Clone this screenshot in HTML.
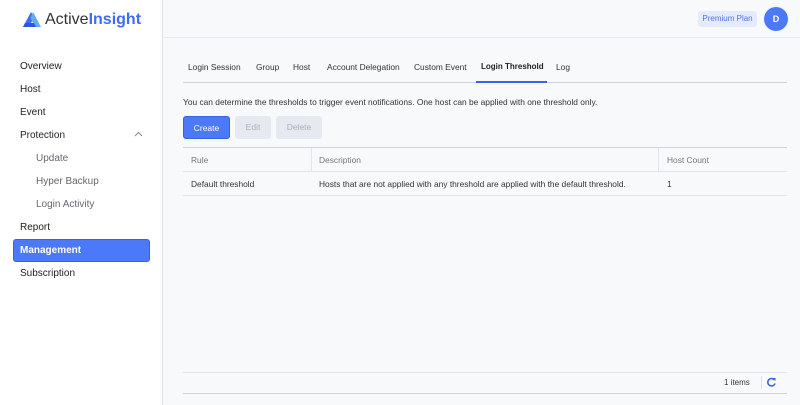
<!DOCTYPE html><html><head><style>
*{box-sizing:border-box;margin:0;padding:0}
body{width:800px;height:405px;overflow:hidden;font-family:"Liberation Sans",sans-serif;background:#f8f9fb;position:relative;color:#222}
.sb{position:absolute;left:0;top:0;width:163px;height:405px;background:#fff;border-right:1px solid #dfe2e8}
.logo{position:absolute;left:22px;top:11px;font-size:16px;color:#333;display:flex;align-items:center}
.logo b{color:#3d6df5;font-weight:bold}
.nav{position:absolute;left:20px;font-size:10px;color:#222}
.sub{left:36px;color:#6b6570}
.act{position:absolute;left:13px;top:239px;width:137px;height:23px;background:#4c78fa;border:1px solid #3d62d8;border-radius:3px}
.hd{position:absolute;left:164px;top:0;right:0;height:38px;border-bottom:1px solid #e6e8ee;background:#f8f9fb}
.plan{position:absolute;left:698px;top:11px;width:59px;height:16px;background:#e4ebfd;border-radius:3px;font-size:8px;color:#5574e0;text-align:center;line-height:16px}
.av{position:absolute;left:764px;top:7px;width:24px;height:24px;border-radius:50%;background:#4c78fa;color:#fff;font-size:9px;font-weight:bold;text-align:center;line-height:24px}
.t{position:absolute;top:62px;font-size:8.4px;color:#333}
.tl{position:absolute;left:183px;top:82px;width:604px;height:1px;background:#cfd4de}
.btn{position:absolute;top:116px;height:23px;border-radius:3px;font-size:8.5px;text-align:center;line-height:23px}
.c{position:absolute;font-size:8.4px}
</style></head><body>
<div class="sb">
<div class="logo"><svg width="20" height="18" viewBox="0 0 20 18"><path d="M9 1 L1 16 L7 16 L12 6Z" fill="#3d6df5"/><path d="M11 1 L19 16 L13 16 L8.5 7Z" fill="#63a9f5"/><path d="M3 12 L12 12 L14 16 L1 16Z" fill="#2f56d8"/></svg><span style="margin-left:3px">Active<b>Insight</b></span></div>
<div class="nav" style="top:61px">Overview</div>
<div class="nav" style="top:84px">Host</div>
<div class="nav" style="top:107px">Event</div>
<div class="nav" style="top:130px">Protection</div>
<svg style="position:absolute;left:134px;top:131px" width="9" height="6"><path d="M1 5 L4.5 1.5 L8 5" stroke="#888" fill="none"/></svg>
<div class="nav sub" style="top:153px">Update</div>
<div class="nav sub" style="top:176px">Hyper Backup</div>
<div class="nav sub" style="top:199px">Login Activity</div>
<div class="nav" style="top:222px">Report</div>
<div class="act"></div>
<div class="nav" style="top:245px;color:#fff;font-weight:bold">Management</div>
<div class="nav" style="top:268px">Subscription</div>
</div>
<div class="hd"></div>
<div class="plan">Premium Plan</div>
<div class="av">D</div>
<div class="t" style="left:188px">Login Session</div>
<div class="t" style="left:256px">Group</div>
<div class="t" style="left:293px">Host</div>
<div class="t" style="left:327px">Account Delegation</div>
<div class="t" style="left:414px">Custom Event</div>
<div class="t" style="left:481px;font-weight:bold;color:#222;font-size:8px">Login Threshold</div>
<div class="t" style="left:556px">Log</div>
<div class="tl"></div>
<div style="position:absolute;left:476px;top:81px;width:71px;height:2px;background:#3d62f0"></div>
<div class="c" style="left:183px;top:97px;color:#333">You can determine the thresholds to trigger event notifications. One host can be applied with one threshold only.</div>
<div class="btn" style="left:183px;width:47px;background:#4c78fa;border:1px solid #3d62d8;color:#fff">Create</div>
<div class="btn" style="left:235px;width:36px;background:#e6e9ef;color:#aab0bb">Edit</div>
<div class="btn" style="left:276px;width:46px;background:#e6e9ef;color:#aab0bb">Delete</div>
<div style="position:absolute;left:183px;top:147px;width:604px;height:1px;background:#cfd4de"></div>
<div style="position:absolute;left:183px;top:171px;width:604px;height:1px;background:#e2e5eb"></div>
<div style="position:absolute;left:183px;top:195px;width:604px;height:1px;background:#e2e5eb"></div>
<div style="position:absolute;left:311px;top:148px;width:1px;height:23px;background:#e2e5eb"></div>
<div style="position:absolute;left:658px;top:148px;width:1px;height:23px;background:#e2e5eb"></div>
<div class="c" style="left:191px;top:155px;color:#777">Rule</div>
<div class="c" style="left:319px;top:155px;color:#777">Description</div>
<div class="c" style="left:667px;top:155px;color:#777">Host Count</div>
<div class="c" style="left:191px;top:179px;color:#333">Default threshold</div>
<div class="c" style="left:319px;top:179px;color:#333">Hosts that are not applied with any threshold are applied with the default threshold.</div>
<div class="c" style="left:667px;top:179px;color:#333">1</div>
<div style="position:absolute;left:183px;top:372px;width:604px;height:1px;background:#e2e5eb"></div>
<div style="position:absolute;left:183px;top:393px;width:604px;height:1px;background:#cfd4de"></div>
<div class="c" style="left:724px;top:378px;color:#333;font-size:8px">1 items</div>
<div style="position:absolute;left:761px;top:376px;width:1px;height:13px;background:#dde0e6"></div>
<svg style="position:absolute;left:766px;top:377px" width="11" height="11" viewBox="0 0 11 11"><path d="M8.5 3 A3.7 3.7 0 1 0 9 6.5" stroke="#3d62f0" stroke-width="1.6" fill="none"/><path d="M6.5 1 L9.5 1 L9.5 4Z" fill="#3d62f0"/></svg>
</body></html>
